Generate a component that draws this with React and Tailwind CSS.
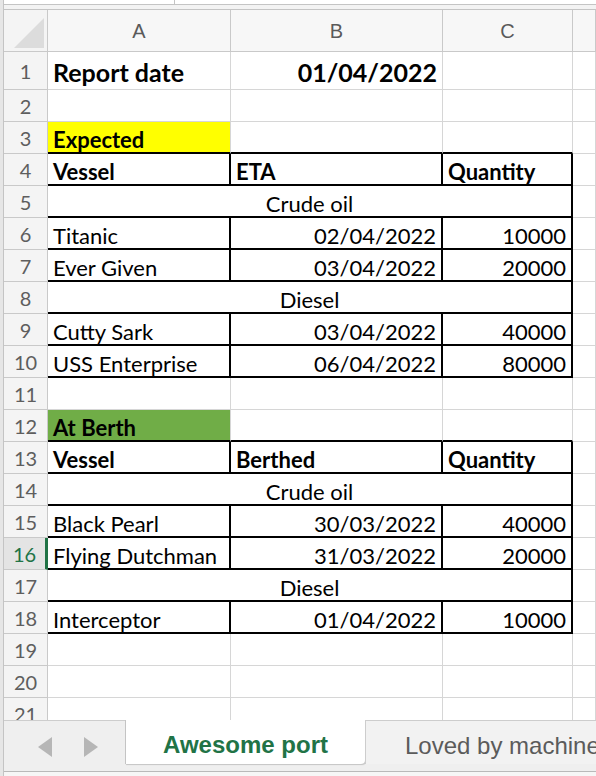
import React from 'react';

const GRID = 'grid grid-cols-[44px_183px_212px_130px_23px]';
const cellFont = { fontFamily: 'Lato, "Open Sans", sans-serif' };

// each row: h = height, cells = [A, B, C] or merged
const rows = [
  { n: 1, h: 'h-[38px]', big: true, cells: [{ t: 'Report date', b: true }, { t: '01/04/2022', b: true, r: true }, {}] },
  { n: 2, cells: [{}, {}, {}] },
  { n: 3, cells: [{ t: 'Expected', b: true, bg: 'bg-[#ffff00]', bb: true }, { bb: true }, { bb: true }] },
  { n: 4, cells: [{ t: 'Vessel', b: true, box: true }, { t: 'ETA', b: true, box: true }, { t: 'Quantity', b: true, box: true }] },
  { n: 5, merged: 'Crude oil' },
  { n: 6, cells: [{ t: 'Titanic', box: true }, { t: '02/04/2022', r: true, box: true }, { t: '10000', r: true, box: true }] },
  { n: 7, cells: [{ t: 'Ever Given', box: true }, { t: '03/04/2022', r: true, box: true }, { t: '20000', r: true, box: true }] },
  { n: 8, merged: 'Diesel' },
  { n: 9, cells: [{ t: 'Cutty Sark', box: true }, { t: '03/04/2022', r: true, box: true }, { t: '40000', r: true, box: true }] },
  { n: 10, cells: [{ t: 'USS Enterprise', box: true }, { t: '06/04/2022', r: true, box: true }, { t: '80000', r: true, box: true }] },
  { n: 11, cells: [{}, {}, {}] },
  { n: 12, cells: [{ t: 'At Berth', b: true, bg: 'bg-[#70ad47]', bb: true }, { bb: true }, { bb: true }] },
  { n: 13, cells: [{ t: 'Vessel', b: true, box: true }, { t: 'Berthed', b: true, box: true }, { t: 'Quantity', b: true, box: true }] },
  { n: 14, merged: 'Crude oil' },
  { n: 15, cells: [{ t: 'Black Pearl', box: true }, { t: '30/03/2022', r: true, box: true }, { t: '40000', r: true, box: true }] },
  { n: 16, sel: true, cells: [{ t: 'Flying Dutchman', box: true }, { t: '31/03/2022', r: true, box: true }, { t: '20000', r: true, box: true }] },
  { n: 17, merged: 'Diesel' },
  { n: 18, cells: [{ t: 'Interceptor', box: true }, { t: '01/04/2022', r: true, box: true }, { t: '10000', r: true, box: true }] },
  { n: 19, cells: [{}, {}, {}] },
  { n: 20, cells: [{}, {}, {}] },
  { n: 21, cells: [{}, {}, {}] },
];

function RowHeader({ n, sel }) {
  return (
    <div
      className={`flex items-center justify-center border-b border-r border-[#c9c9c9] text-[20px] ${
        sel ? 'bg-[#e4e4e4] text-[#217346] border-r-[3px] border-r-[#217346]' : 'bg-[#f4f4f4] text-[#5e5e5e]'
      }`}
      style={cellFont}
    >
      {n}
    </div>
  );
}

function Cell({ c, big }) {
  const right = c.box ? 'border-r-2 border-r-black' : 'border-r border-r-[#d6d6d6]';
  const bottom = c.box || c.bb ? 'border-b-2 border-b-black' : 'border-b border-b-[#d6d6d6]';
  return (
    <div
      className={`flex items-end px-[5px] leading-none text-black whitespace-nowrap overflow-hidden ${
        big ? 'text-[25px] pb-[4px]' : 'text-[22px] pb-[1px]'
      } ${right} ${bottom} ${c.bg || 'bg-white'} ${c.r ? 'justify-end' : 'justify-start'} ${c.b ? 'font-bold' : ''}`}
      style={cellFont}
    >
      {c.t}
    </div>
  );
}

function Sheet() {
  return (
    <div className="flex flex-col">
      {/* column headers */}
      <div className={`${GRID} h-[42px]`}>
        <div className="relative bg-[#f4f4f4] border-r border-b border-[#c9c9c9]">
          <svg className="absolute left-[10px] top-[8px]" width="30" height="30" viewBox="0 0 30 30">
            <polygon points="30,0 30,30 0,30" fill="#dcdcdc" />
          </svg>
        </div>
        {['A', 'B', 'C', ''].map((l, i) => (
          <div
            key={i}
            className="flex items-center justify-center bg-[#f7f7f7] border-r border-b border-[#c9c9c9] text-[20px] text-[#5a5a5a]"
            style={{ fontFamily: '"Liberation Sans", Arial, sans-serif' }}
          >
            {l}
          </div>
        ))}
      </div>

      {rows.map((row) => (
        <div key={row.n} className={`${GRID} ${row.h || 'h-[32px]'}`}>
          <RowHeader n={row.n} sel={row.sel} />
          {row.merged ? (
            <div
              className="col-span-3 flex items-end justify-center pb-[1px] text-[22px] leading-none text-black bg-white border-r-2 border-b-2 border-black"
              style={cellFont}
            >
              {row.merged}
            </div>
          ) : (
            row.cells.map((c, i) => <Cell key={i} c={c} big={row.big} />)
          )}
          <div className="bg-white border-r border-b border-[#d6d6d6]" />
        </div>
      ))}
    </div>
  );
}

function TabBar() {
  return (
    <div className="flex flex-col h-[56px] shrink-0">
      <div className="flex h-[52px] bg-[#efefef] border-b border-[#b9b9b9]">
        <div className="w-[121px] flex items-center gap-[32px] pl-[34px] pt-[2px] border-t border-[#cdcdcd]">
          <svg width="14" height="20" viewBox="0 0 14 20">
            <polygon points="14,0 14,20 0,10" fill="#b6b6b6" />
          </svg>
          <svg width="14" height="20" viewBox="0 0 14 20">
            <polygon points="0,0 0,20 14,10" fill="#b6b6b6" />
          </svg>
        </div>
        <div className="w-[240px] h-[44px] flex items-center justify-center pt-[6px] bg-white border-l border-[#c4c4c4] rounded-br-[4px] shadow-[1px_1px_1px_rgba(0,0,0,0.18)]">
          <span
            className="text-[24px] font-bold text-[#217346]"
            style={{ fontFamily: '"Liberation Sans", Arial, sans-serif' }}
          >
            Awesome port
          </span>
        </div>
        <div className="flex-1 h-[44px] flex items-center pl-[39px] pt-[6px] bg-[#f2f2f2] border-t border-l border-[#cdcdcd] whitespace-nowrap overflow-hidden">
          <span
            className="text-[24px] text-[#5b5b5b]"
            style={{ fontFamily: '"Liberation Sans", Arial, sans-serif' }}
          >
            Loved by machines
          </span>
        </div>
      </div>
      <div className="flex-1 bg-[#f6f6f6]" />
    </div>
  );
}

export default function App() {
  return (
    <div className="w-[596px] h-[776px] overflow-hidden bg-white flex">
      <div className="w-[4px] shrink-0 bg-[#e6e6e6] border-r border-[#c4c4c4]" />
      <div className="w-[592px] flex flex-col">
        {/* remnant of the formula bar */}
        <div className="h-[4px] flex">
          <div className="w-[171px] border-r border-[#c4c4c4]" />
        </div>
        <div className="h-[6px] bg-[#f3f3f3] border-t border-b border-[#c4c4c4]" />
        <div className="h-[710px] overflow-hidden">
          <Sheet />
        </div>
        <TabBar />
      </div>
    </div>
  );
}
